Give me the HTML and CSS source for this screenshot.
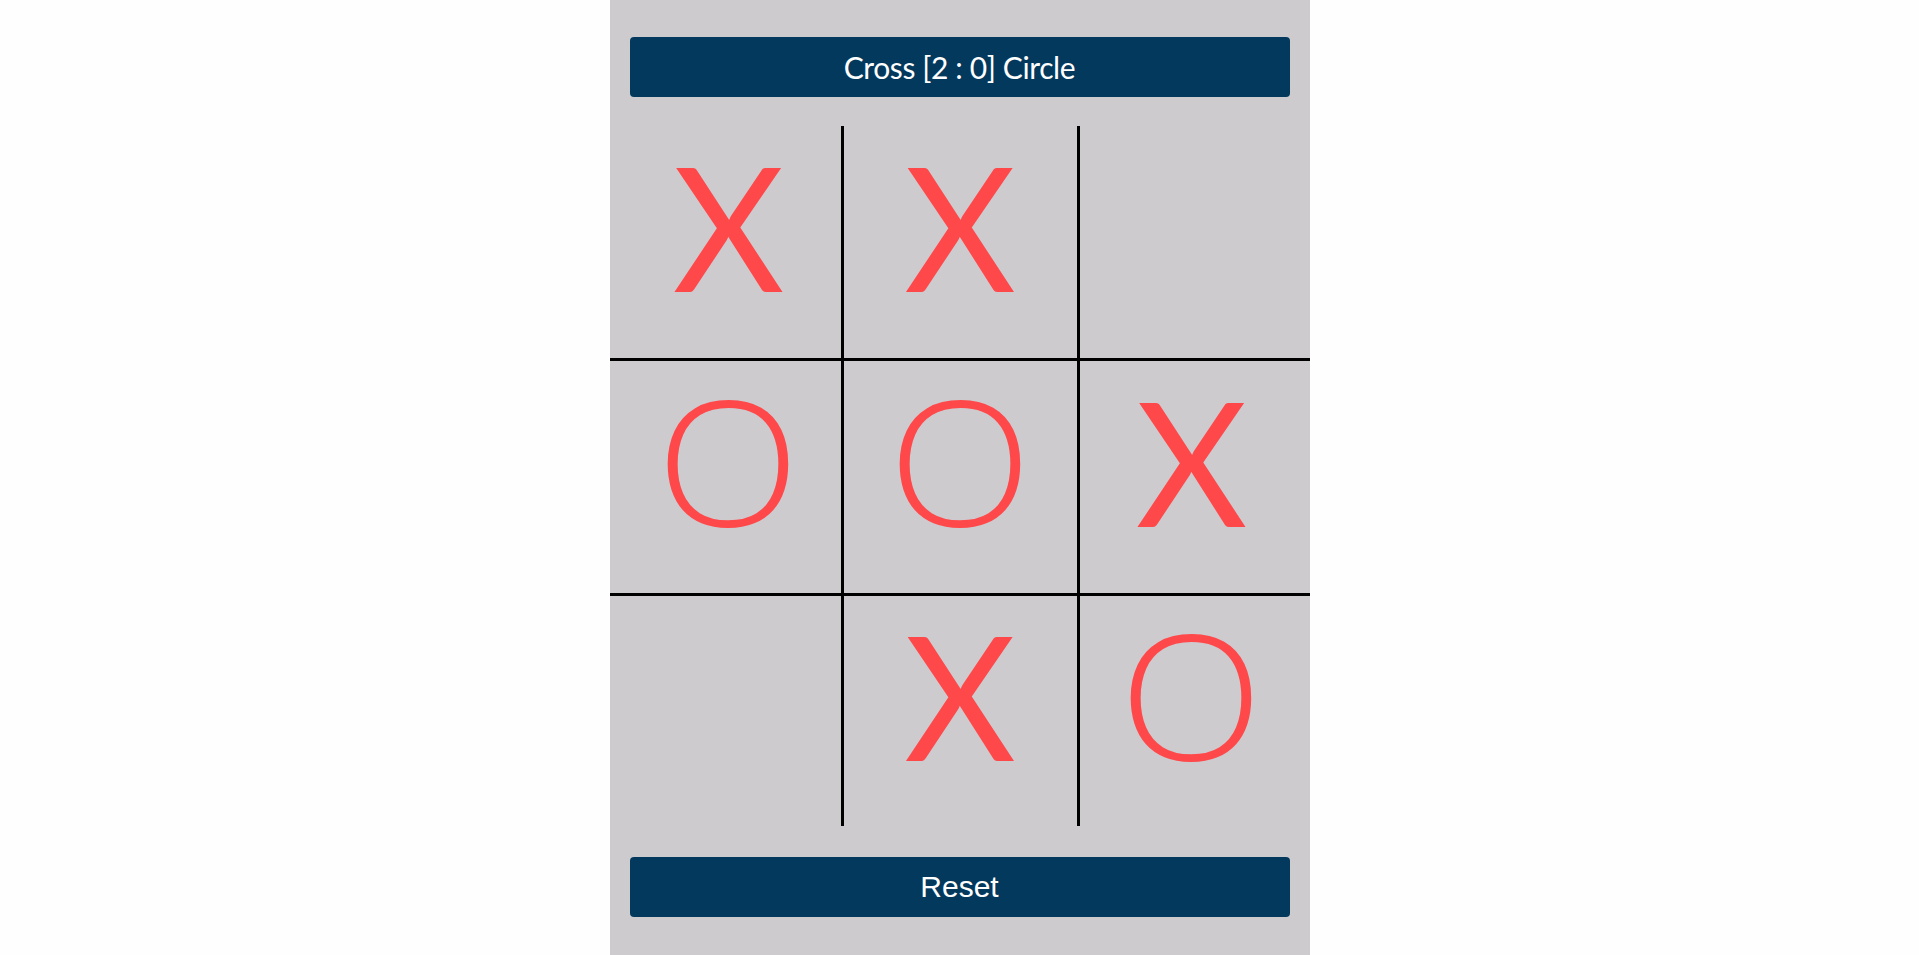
FILE: index.html
```html
<!DOCTYPE html>
<html lang="en">
<head>
<meta charset="utf-8">
<title>Tic Tac Toe</title>
<link rel="stylesheet" href="styles.css">
</head>
<body>
<main class="game">
  <div class="score">Cross [2 : 0] Circle</div>
  <div class="board">
    <div class="cell"><span class="mark mark-x">X</span></div>
    <div class="cell"><span class="mark mark-x">X</span></div>
    <div class="cell"></div>
    <div class="cell"><span class="mark mark-o">O</span></div>
    <div class="cell"><span class="mark mark-o">O</span></div>
    <div class="cell"><span class="mark mark-x">X</span></div>
    <div class="cell"></div>
    <div class="cell"><span class="mark mark-x">X</span></div>
    <div class="cell"><span class="mark mark-o">O</span></div>
  </div>
  <button class="reset" type="button">Reset</button>
</main>
</body>
</html>
```
FILE: styles.css
```css
* { box-sizing: border-box; }

html, body {
  margin: 0;
  padding: 0;
  height: 100%;
}

body {
  background: #fefefe;
  font-family: "Lato", "Liberation Sans", sans-serif;
}

.game {
  width: 700px;
  height: 955px;
  margin: 0 auto;
  background: #cecbcf;
  padding-top: 37px;
  display: flex;
  flex-direction: column;
  align-items: center;
}

.score {
  width: 660px;
  height: 60px;
  background: #02395d;
  color: #ffffff;
  border-radius: 4px;
  display: flex;
  align-items: center;
  justify-content: center;
  font-family: "Lato", sans-serif;
  font-size: 30px;
  letter-spacing: -0.4px;
}

.board {
  margin-top: 29px;
  width: 700px;
  height: 700px;
  display: grid;
  grid-template-columns: 231px 233px 230px;
  grid-template-rows: 232px 232px 230px;
  gap: 3px;
  background: #000000;
}

.cell {
  background: #cecbcf;
  display: flex;
  align-items: center;
  justify-content: center;
  padding-bottom: 32px;
}

.cell:nth-child(3n+1) {
  padding-left: 7px;
}

.cell:nth-child(3n) {
  padding-right: 6px;
}

.mark {
  color: #ff484a;
  font-family: "Lato", sans-serif;
  font-size: 172px;
  line-height: 1;
  display: block;
}

.mark-o {
  font-family: "Open Sans", sans-serif;
  font-weight: 300;
  font-size: 173px;
  margin-top: -4px;
  transform: scaleX(1.09);
}

.reset {
  margin-top: 31px;
  width: 660px;
  height: 60px;
  border: none;
  border-radius: 4px;
  background: #02395d;
  color: #ffffff;
  font-family: "Liberation Sans", Arial, sans-serif;
  font-size: 30px;
  padding: 0;
}
```
